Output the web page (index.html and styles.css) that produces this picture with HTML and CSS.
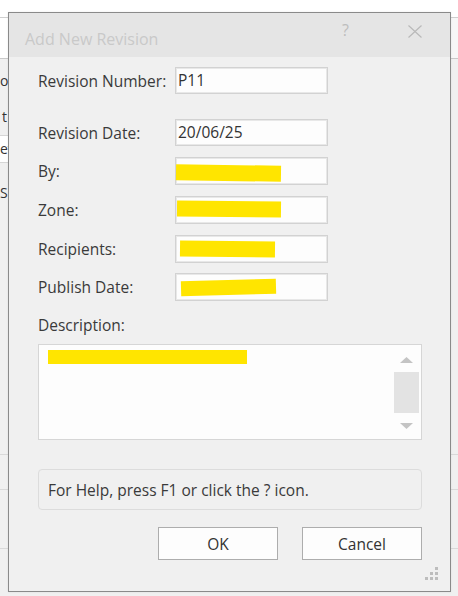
FILE: index.html
```html
<!DOCTYPE html>
<html>
<head>
<meta charset="utf-8">
<title>Add New Revision</title>
<link rel="stylesheet" href="styles.css">
</head>
<body>
<div class="desk">
  <div class="app">
    <div class="app-head"></div>
    <div class="app-toolbar"></div>
    <div class="app-body">
      <div class="frag frag-1">o-</div>
      <div class="frag frag-2">t</div>
      <div class="frag frag-3">et</div>
      <div class="frag frag-4">S</div>
    </div>
    <div class="app-lines">
      <div class="app-line l1"></div>
      <div class="app-line l2"></div>
      <div class="app-line l3"></div>
    </div>
  </div>

  <div class="dialog">
    <div class="titlebar">
      <span class="title">Add New Revision</span>
      <span class="tb-help">?</span>
      <span class="tb-close">
        <svg width="16" height="13" viewBox="0 0 16 13"><path d="M1.5 0.5 L14.5 12.5 M14.5 0.5 L1.5 12.5" stroke="#b9b9b9" stroke-width="1.2" fill="none"/></svg>
      </span>
    </div>
    <div class="body">
      <div class="form">
        <div class="row row-number">
          <label class="lbl">Revision Number:</label>
          <div class="field"><span class="val">P11</span></div>
        </div>
        <div class="row row-date">
          <label class="lbl">Revision Date:</label>
          <div class="field"><span class="val">20/06/25</span></div>
        </div>
        <div class="row">
          <label class="lbl">By:</label>
          <div class="field"><span class="hl hl-by"></span></div>
        </div>
        <div class="row">
          <label class="lbl">Zone:</label>
          <div class="field"><span class="hl hl-zone"></span></div>
        </div>
        <div class="row">
          <label class="lbl">Recipients:</label>
          <div class="field"><span class="hl hl-rec"></span></div>
        </div>
        <div class="row row-pub">
          <label class="lbl">Publish Date:</label>
          <div class="field"><span class="hl hl-pub"></span></div>
        </div>
      </div>

      <div class="desc-label">Description:</div>
      <div class="desc">
        <div class="desc-text"><span class="hl hl-desc"></span></div>
        <div class="scroll">
          <svg class="arrow" width="13" height="6" viewBox="0 0 13 6"><path d="M0 6 L6.5 0 L13 6 Z" fill="#c4c4c4"/></svg>
          <div class="thumb"></div>
          <svg class="arrow" width="13" height="6" viewBox="0 0 13 6"><path d="M0 0 L13 0 L6.5 6 Z" fill="#c4c4c4"/></svg>
        </div>
      </div>

      <div class="help">For Help, press F1 or click the ? icon.</div>

      <div class="buttons">
        <button class="btn">OK</button>
        <button class="btn">Cancel</button>
      </div>
    </div>
    <svg class="grip" width="13" height="13" viewBox="0 0 13 13">
      <rect x="10" y="0" width="3" height="3" fill="#bdbdbd"/>
      <rect x="5" y="5" width="3" height="3" fill="#bdbdbd"/>
      <rect x="10" y="5" width="3" height="3" fill="#bdbdbd"/>
      <rect x="0" y="10" width="3" height="3" fill="#bdbdbd"/>
      <rect x="5" y="10" width="3" height="3" fill="#bdbdbd"/>
      <rect x="10" y="10" width="3" height="3" fill="#bdbdbd"/>
    </svg>
  </div>
</div>
</body>
</html>
```

FILE: styles.css
```css
* { box-sizing: border-box; }
html, body { margin: 0; padding: 0; }
body {
  font-family: "Open Sans", "Liberation Sans", sans-serif;
  background: #f0f0f0;
}
.desk {
  position: relative;
  width: 458px;
  height: 596px;
  overflow: hidden;
  background: #f0f0f0;
}
.app {
  display: flex;
  flex-direction: column;
  height: 100%;
}
.app-head {
  height: 18px;
  background: #ffffff;
  border-bottom: 1px solid #cfcfcf;
}
.app-toolbar {
  height: 41px;
  background: linear-gradient(to right, #ffffff 0, #ffffff 50%, #f7f7f7 50%);
  border-bottom: 1px solid #c9c9c9;
}
.app-body {
  display: flex;
  flex-direction: column;
  align-items: flex-start;
  padding-top: 12px;
}
.frag {
  white-space: nowrap;
  font-size: 14px;
  color: #333;
  height: 20px;
  line-height: 20px;
}
.frag-2 { margin-top: 16px; padding-left: 2px; }
.frag-3 {
  margin-top: 8px;
  height: 28px;
  line-height: 26px;
  width: 12px;
  background: #fff;
  border-top: 1px solid #d6d6d6;
  border-bottom: 1px solid #d6d6d6;
}
.frag-4 { margin-top: 20px; }
.app-lines {
  display: flex;
  flex-direction: column;
  margin-top: auto;
  padding-bottom: 47px;
}
.app-line { height: 1px; background: #d9d9d9; }
.app-line.l2 { margin-top: 34px; }
.app-line.l3 { margin-top: 58px; }

/* dialog window */
.dialog {
  position: absolute;
  left: 8px;
  top: 12px;
  width: 443px;
  height: 580px;
  border: 1px solid #8a8a8a;
  background: #f0f0f0;
  display: flex;
  flex-direction: column;
  box-shadow: 0 0 2px rgba(0,0,0,0.08);
}
.titlebar {
  height: 44px;
  background: #e5e5e5;
  display: flex;
  align-items: center;
  padding-left: 16px;
  flex-shrink: 0;
}
.title {
  font-size: 16px;
  color: #c9c9c9;
  flex: 1;
  margin-top: 7px;
}
.tb-help {
  font-size: 16px;
  color: #bdbdbd;
  width: 10px;
  margin-right: 55px;
  margin-top: -10px;
}
.tb-close {
  display: flex;
  margin-right: 27px;
  margin-top: -7px;
}

.body {
  flex: 1;
  display: flex;
  flex-direction: column;
  padding: 10px 28px 0 29px;
}
.form {
  display: flex;
  flex-direction: column;
  gap: 11px;
}
.row {
  display: flex;
  align-items: center;
  height: 28px;
}
.row-number { height: 27px; margin-bottom: 14px; }
.row-date { height: 27px; }
.row-pub { margin-top: -1px; }
.row-number .field, .row-date .field { height: 27px; }
.lbl {
  width: 137px;
  font-size: 15.5px;
  color: #3a3a3a;
}
.field {
  width: 153px;
  height: 28px;
  background: #fdfdfd;
  border: 1px solid #d2d2d2;
  box-shadow: inset 0 0 0 1px #e8e8e8;
  display: flex;
  flex-direction: column;
  padding-left: 2px;
}
.val {
  font-size: 15.5px;
  color: #333;
  line-height: 25px;
}
.hl {
  display: block;
  background: #ffe500;
}
.hl-by { width: 105px; height: 16px; margin: 7px 0 0 -2px; transform: rotate(0.8deg); }
.hl-zone { width: 104px; height: 16px; margin: 4px 0 0 -1px; transform: rotate(0.5deg); }
.hl-rec { width: 95px; height: 16px; margin: 5px 0 0 2px; transform: rotate(0.6deg); }
.hl-pub { width: 95px; height: 15px; margin: 6px 0 0 3px; transform: rotate(-1.6deg); }
.hl-desc { width: 199px; height: 14px; margin: 5px 0 0 9px; }

.desc-label {
  margin-top: 14px;
  height: 20px;
  line-height: 20px;
  font-size: 15.5px;
  color: #3a3a3a;
}
.desc {
  margin-top: 9px;
  height: 96px;
  background: #fdfdfd;
  border: 1px solid #d6d6d6;
  display: flex;
}
.desc-text { flex: 1; }
.scroll {
  width: 27px;
  padding: 12px 2px 0 0;
  display: flex;
  flex-direction: column;
  align-items: center;
}
.thumb {
  width: 25px;
  height: 41px;
  background: #e3e3e3;
  margin: 9px 0 10px;
}
.help {
  margin-top: 29px;
  height: 41px;
  border: 1px solid #dcdcdc;
  border-radius: 4px;
  display: flex;
  align-items: center;
  padding-left: 9px;
  font-size: 15.5px;
  color: #3a3a3a;
}
.buttons {
  margin-top: 17px;
  display: flex;
  justify-content: flex-end;
  gap: 24px;
}
.btn {
  width: 120px;
  height: 33px;
  background: #fdfdfd;
  border: 1px solid #adadad;
  font-family: "Open Sans", "Liberation Sans", sans-serif;
  font-size: 15.5px;
  color: #333;
  padding: 0;
}
.grip {
  position: absolute;
  right: 12px;
  bottom: 11px;
}
```
